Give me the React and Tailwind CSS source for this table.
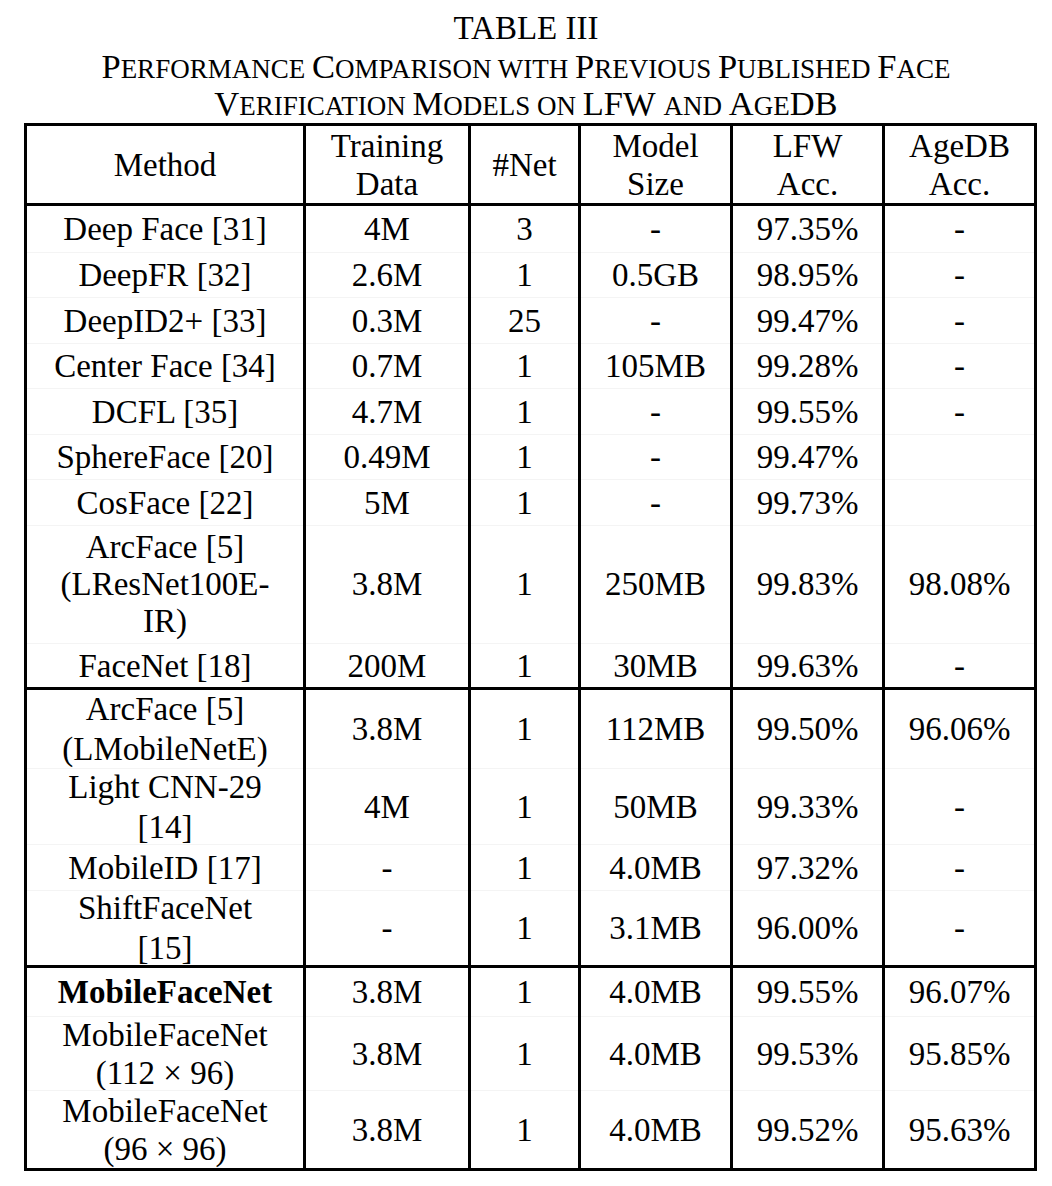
import React from "react";

const COLS = "grid grid-cols-[276px_162px_107px_149px_149px_149px] gap-x-[3px]";

function SC({ text }) {
  // small caps: uppercase chars full size, lowercase as smaller capitals
  const parts = [];
  let buf = "";
  let mode = null;
  const flush = () => {
    if (!buf) return;
    parts.push({ s: buf, small: mode === "small" });
    buf = "";
  };
  for (const ch of text) {
    const m = ch >= "a" && ch <= "z" ? "small" : "big";
    if (ch === " ") {
      buf += ch;
      continue;
    }
    if (mode !== m) {
      flush();
      mode = m;
    }
    buf += ch;
  }
  flush();
  return (
    <>
      {parts.map((p, i) =>
        p.small ? (
          <span key={i} className="text-[27px] uppercase leading-none">
            {p.s}
          </span>
        ) : (
          <span key={i} className="leading-none">{p.s}</span>
        )
      )}
    </>
  );
}

function Row({ cells, h, first, bold, lead = "leading-[38px]" }) {
  return (
    <div className={COLS}>
      {cells.map((c, i) => (
        <div
          key={i}
          style={{ height: h }}
          className={`bg-white flex items-center justify-center text-center whitespace-pre-line ${lead} ${
            first ? "" : "border-t border-[#f4f4f4]"
          } ${bold && i === 0 ? "font-bold" : ""}`}
        >
          {c}
        </div>
      ))}
    </div>
  );
}

const group1 = [
  [["Deep Face [31]", "4M", "3", "-", "97.35%", "-"], 46],
  [["DeepFR [32]", "2.6M", "1", "0.5GB", "98.95%", "-"], 45],
  [["DeepID2+ [33]", "0.3M", "25", "-", "99.47%", "-"], 46],
  [["Center Face [34]", "0.7M", "1", "105MB", "99.28%", "-"], 45],
  [["DCFL [35]", "4.7M", "1", "-", "99.55%", "-"], 46],
  [["SphereFace [20]", "0.49M", "1", "-", "99.47%", ""], 45],
  [["CosFace [22]", "5M", "1", "-", "99.73%", ""], 46],
  [["ArcFace [5]\n(LResNet100E-\nIR)", "3.8M", "1", "250MB", "99.83%", "98.08%"], 118, "leading-[37px]"],
  [["FaceNet [18]", "200M", "1", "30MB", "99.63%", "-"], 44],
];

const group2 = [
  [["ArcFace [5]\n(LMobileNetE)", "3.8M", "1", "112MB", "99.50%", "96.06%"], 78, "leading-[40px]"],
  [["Light CNN-29\n[14]", "4M", "1", "50MB", "99.33%", "-"], 76, "leading-[40px]"],
  [["MobileID [17]", "-", "1", "4.0MB", "97.32%", "-"], 46],
  [["ShiftFaceNet\n[15]", "-", "1", "3.1MB", "96.00%", "-"], 75, "leading-[40px]"],
];

const group3 = [
  [["MobileFaceNet", "3.8M", "1", "4.0MB", "99.55%", "96.07%"], 48, "leading-[38px]", true],
  [["MobileFaceNet\n(112 × 96)", "3.8M", "1", "4.0MB", "99.53%", "95.85%"], 74],
  [["MobileFaceNet\n(96 × 96)", "3.8M", "1", "4.0MB", "99.52%", "95.63%"], 78],
];

function Group({ rows }) {
  return (
    <div className="flex flex-col">
      {rows.map(([cells, h, lead, bold], i) => (
        <Row key={i} cells={cells} h={h} first={i === 0} lead={lead} bold={bold} />
      ))}
    </div>
  );
}

export default function App() {
  return (
    <div className="w-[1052px] min-h-[1186px] bg-white text-black font-['Liberation_Serif',serif] text-[33px]">
      <div className="pt-[10px] text-center leading-[37px]">
        <div className="h-[37px]">TABLE III</div>
        <div className="h-[37px] flex items-end justify-center pb-[1px] text-[34.5px]">
          <div className="leading-none">
            <SC text="Performance Comparison with Previous Published Face" />
          </div>
        </div>
        <div className="h-[37px] flex items-end justify-center pb-[1px] text-[34.5px]">
          <div className="leading-none">
            <SC text="Verification Models on LFW and AgeDB" />
          </div>
        </div>
      </div>
      <div className="ml-[24px] mt-[2px] w-[1013px] bg-black p-[3px] flex flex-col gap-y-[3px]">
        <Row
          cells={["Method", "Training\nData", "#Net", "Model\nSize", "LFW\nAcc.", "AgeDB\nAcc."]}
          h={77}
          first
        />
        <Group rows={group1} />
        <Group rows={group2} />
        <Group rows={group3} />
      </div>
    </div>
  );
}
